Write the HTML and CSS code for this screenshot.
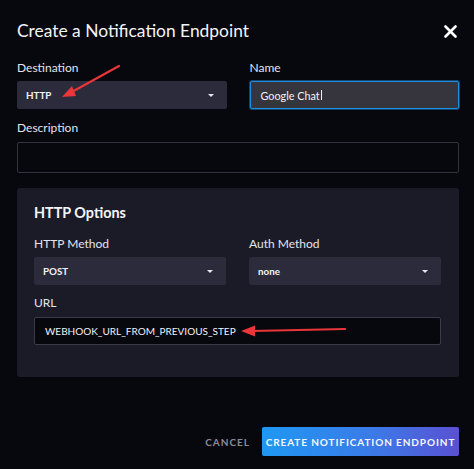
FILE: index.html
```html
<!DOCTYPE html>
<html lang="en">
<head>
<meta charset="utf-8">
<title>Create a Notification Endpoint</title>
<link rel="stylesheet" href="styles.css">
</head>
<body>
<div class="modal">
  <div class="header">
    <h1 class="title">Create a Notification Endpoint</h1>
    <button class="close" aria-label="Close">
      <svg width="13" height="13" viewBox="0 0 13 13"><path d="M1.5 1.5 L11.5 11.5 M11.5 1.5 L1.5 11.5" stroke="#fff" stroke-width="2.6" stroke-linecap="round"/></svg>
    </button>
  </div>

  <div class="row">
    <div class="field">
      <div class="label">Destination</div>
      <div class="select wide"><span>HTTP</span><i class="caret"></i></div>
    </div>
    <div class="field">
      <div class="label">Name</div>
      <div class="input focused"><span>Google Chat</span><i class="cursor"></i></div>
    </div>
  </div>

  <div class="field desc">
    <div class="label desc-label">Description</div>
    <div class="input empty"></div>
  </div>

  <div class="panel">
    <div class="panel-title">HTTP Options</div>
    <div class="row">
      <div class="field">
        <div class="label">HTTP Method</div>
        <div class="select"><span>POST</span><i class="caret"></i></div>
      </div>
      <div class="field">
        <div class="label">Auth Method</div>
        <div class="select"><span>none</span><i class="caret"></i></div>
      </div>
    </div>
    <div class="field url">
      <div class="label">URL</div>
      <div class="input url-input"><span>WEBHOOK_URL_FROM_PREVIOUS_STEP</span></div>
    </div>
  </div>

  <div class="footer">
    <button class="btn-cancel">CANCEL</button>
    <button class="btn-primary">CREATE NOTIFICATION ENDPOINT</button>
  </div>

  <svg class="annot" width="474" height="469" viewBox="0 0 474 469">
    <path d="M119 66 L70 93" stroke="#e8363a" stroke-width="2.2" stroke-linecap="round" fill="none"/>
    <path d="M62 97 L72 86 L76 96 Z" fill="#e8363a"/>
    <path d="M345 329 L252 331" stroke="#e8363a" stroke-width="2.2" stroke-linecap="round" fill="none"/>
    <path d="M241 331 L255 325.5 L255 336.5 Z" fill="#e8363a"/>
  </svg>
</div>
</body>
</html>
```

FILE: styles.css
```css
* { box-sizing: border-box; }
html, body {
  margin: 0;
  padding: 0;
  background: #07070e;
}
body {
  font-family: "Lato", "Noto Sans", sans-serif;
  color: #e6e6ee;
  width: 474px;
  height: 469px;
  overflow: hidden;
}
.modal {
  position: relative;
  padding: 17px 15px 0 17px;
  width: 474px;
  height: 469px;
}
.header {
  display: flex;
  align-items: center;
  justify-content: space-between;
  height: 28px;
}
.title {
  margin: 0;
  font-size: 17.4px;
  font-weight: 400;
  line-height: 28px;
  color: #f4f4f8;
}
.close {
  background: none;
  border: 0;
  padding: 0;
  margin-right: 2px;
  width: 13px;
  height: 13px;
  display: flex;
}
.row {
  display: grid;
  grid-template-columns: 1fr 1fr;
  column-gap: 23px;
  margin-top: 15px;
}
.label {
  font-size: 12px;
  line-height: 16px;
  margin-bottom: 5px;
  color: #e4e4ec;
}
.select {
  height: 28px;
  background: #2b2b3c;
  border-radius: 2px;
  display: flex;
  align-items: center;
  justify-content: space-between;
  padding: 0 13px 0 9px;
  font-size: 9.8px;
  font-weight: 700;
  color: #f2f2f6;
}
.caret {
  width: 0;
  height: 0;
  border-left: 3.5px solid transparent;
  border-right: 3.5px solid transparent;
  border-top: 3.5px solid #e6e6ee;
}
.input {
  height: 28px;
  background: #07070e;
  border: 1px solid #33333f;
  border-radius: 2px;
  display: flex;
  align-items: center;
  padding: 0 10px;
  font-size: 10.8px;
  color: #f2f2f6;
}
.input.focused {
  background: #36353d;
  border: 1px solid #1e8fe0;
  box-shadow: 0 0 0 1px rgba(30, 143, 224, 0.45);
  padding-left: 10px;
}
.cursor {
  display: inline-block;
  width: 1px;
  height: 10px;
  background: #f2f2f6;
  margin-left: 1px;
}
.desc { margin-top: 11px; }
.desc-label { margin-bottom: 6px; }
.input.empty { height: 31px; }
.panel {
  margin-top: 15px;
  background: #1b1b28;
  border-radius: 3px;
  padding: 15px 18px 32px 17px;
  height: 189px;
}
.panel-title {
  font-size: 14.4px;
  font-weight: 700;
  line-height: 20px;
  color: #f4f4f8;
}
.panel .row { margin-top: 13px; }
.url { margin-top: 10px; }
.url .label { margin-bottom: 6px; }
.url-input {
  font-size: 10px;
  font-weight: 400;
  padding-left: 10px;
  background: #07070e;
  border-color: #3a3a48;
}
.footer {
  display: flex;
  justify-content: flex-end;
  align-items: center;
  margin-top: 50px;
  gap: 12px;
}
.btn-cancel {
  background: none;
  border: 0;
  padding: 0;
  font-family: inherit;
  font-size: 10px;
  font-weight: 700;
  letter-spacing: 1px;
  color: #8c8c98;
  white-space: nowrap;
}
.btn-primary {
  height: 29px;
  width: 197px;
  border: 0;
  border-radius: 2px;
  background: linear-gradient(90deg, #1f98f2 0%, #3a7be8 55%, #5a51d2 100%);
  color: #f6f6fb;
  font-family: inherit;
  font-size: 10px;
  font-weight: 700;
  letter-spacing: 0.9px;
  padding: 0;
  white-space: nowrap;
}
.annot {
  position: absolute;
  left: 0;
  top: 0;
  pointer-events: none;
}
```
